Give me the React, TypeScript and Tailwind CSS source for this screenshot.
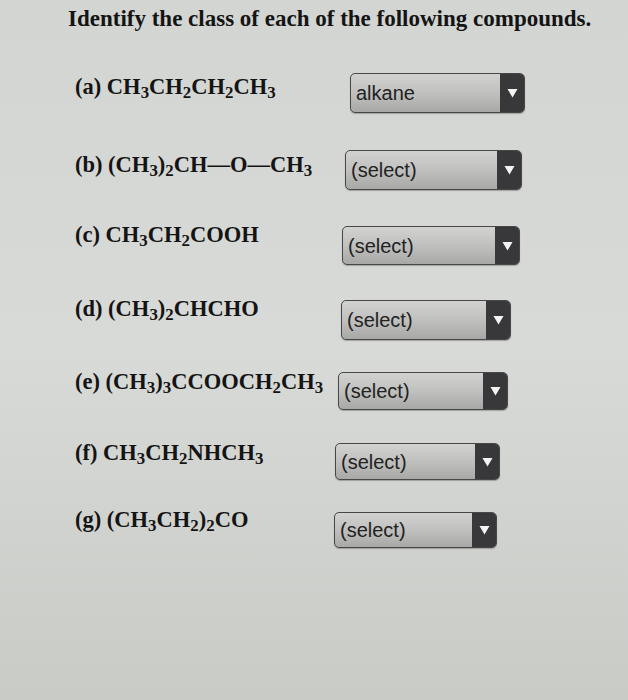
import type { ReactNode } from "react";

type Row = {
  id: string;
  label: ReactNode;
  value: string;
  rowClass: string;
  labelClass: string;
  selectClass: string;
};

const ROWS: Row[] = [
  {
    id: "a",
    label: (
      <>
        (a) CH<sub>3</sub>CH<sub>2</sub>CH<sub>2</sub>CH<sub>3</sub>
      </>
    ),
    value: "alkane",
    rowClass: "h-[77px]",
    labelClass: "w-[275px] mt-[2px]",
    selectClass: "w-[175px] h-[40px]",
  },
  {
    id: "b",
    label: (
      <>
        (b) (CH<sub>3</sub>)<sub>2</sub>CH—O—CH<sub>3</sub>
      </>
    ),
    value: "(select)",
    rowClass: "h-[73px]",
    labelClass: "w-[270px] mt-[3px]",
    selectClass: "w-[177px] h-[40px]",
  },
  {
    id: "c",
    label: (
      <>
        (c) CH<sub>3</sub>CH<sub>2</sub>COOH
      </>
    ),
    value: "(select)",
    rowClass: "h-[74px]",
    labelClass: "w-[267px]",
    selectClass: "w-[178px] h-[39px] mt-[3px]",
  },
  {
    id: "d",
    label: (
      <>
        (d) (CH<sub>3</sub>)<sub>2</sub>CHCHO
      </>
    ),
    value: "(select)",
    rowClass: "h-[73px]",
    labelClass: "w-[266px]",
    selectClass: "w-[170px] h-[40px] mt-[3px]",
  },
  {
    id: "e",
    label: (
      <>
        (e) (CH<sub>3</sub>)<sub>3</sub>CCOOCH<sub>2</sub>CH<sub>3</sub>
      </>
    ),
    value: "(select)",
    rowClass: "h-[69px]",
    labelClass: "w-[263px]",
    selectClass: "w-[170px] h-[38px] mt-[2px]",
  },
  {
    id: "f",
    label: (
      <>
        (f) CH<sub>3</sub>CH<sub>2</sub>NHCH<sub>3</sub>
      </>
    ),
    value: "(select)",
    rowClass: "h-[69px]",
    labelClass: "w-[260px] mt-[2px]",
    selectClass: "w-[165px] h-[37px] mt-[4px]",
  },
  {
    id: "g",
    label: (
      <>
        (g) (CH<sub>3</sub>CH<sub>2</sub>)<sub>2</sub>CO
      </>
    ),
    value: "(select)",
    rowClass: "h-[40px]",
    labelClass: "w-[259px]",
    selectClass: "w-[163px] h-[36px] mt-[4px]",
  },
];

const serif = { fontFamily: "'Liberation Serif', 'Times New Roman', serif" };
const sans = { fontFamily: "'Liberation Sans', Arial, sans-serif" };

function FakeSelect({ value, className }: { value: string; className: string }) {
  return (
    <div
      className={`flex shrink-0 overflow-hidden rounded-[5px] border border-[#474747] bg-gradient-to-b from-[#d2d2d1] via-[#c0c0bf] to-[#a8a8a7] shadow-[0_1px_1px_rgba(0,0,0,0.25)] ${className}`}
    >
      <div
        className="flex flex-1 items-center pl-[5px] text-[20px] leading-none text-[#222]"
        style={sans}
      >
        {value}
      </div>
      <div className="flex w-[24px] items-center justify-center bg-[#38383a]">
        <svg width="11" height="10" viewBox="0 0 11 10" aria-hidden="true">
          <path d="M0.5 1 L10.5 1 L5.5 9.5 Z" fill="#f4f4f4" />
        </svg>
      </div>
    </div>
  );
}

export default function App() {
  return (
    <div className="h-[700px] w-[628px] overflow-hidden bg-gradient-to-b from-[#d3d5d2] via-[#d8dad7] to-[#c9cbc7] text-[#141414]">
      <h1
        className="ml-[68px] mt-[5px] h-[28px] text-[23px] font-bold leading-[28px]"
        style={serif}
      >
        Identify the class of each of the following compounds.
      </h1>

      <div className="mt-[40px] flex flex-col">
        {ROWS.map((r) => (
          <div key={r.id} className={`flex items-start pl-[75px] ${r.rowClass}`}>
            <div
              className={`shrink-0 whitespace-nowrap text-[22.5px] font-bold leading-[24px] ${r.labelClass}`}
              style={serif}
            >
              {r.label}
            </div>
            <FakeSelect value={r.value} className={r.selectClass} />
          </div>
        ))}
      </div>
    </div>
  );
}
